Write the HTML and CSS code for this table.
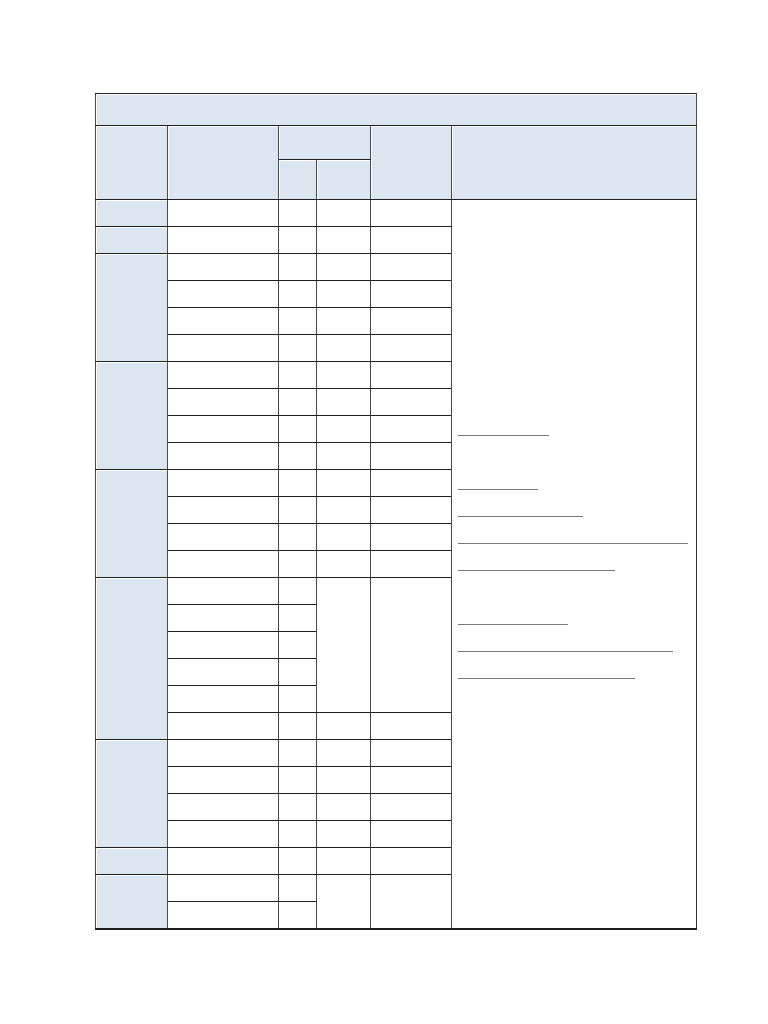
FILE: index.html
```html
<!DOCTYPE html>
<html>
<head>
<meta charset="utf-8">
<link rel="stylesheet" href="styles.css">
</head>
<body>
<table class="grid">
  <colgroup>
    <col class="c1"><col class="c2"><col class="c3"><col class="c4"><col class="c5"><col class="c6">
  </colgroup>
  <thead>
    <tr class="h1"><td class="hd" colspan="6"></td></tr>
    <tr class="h2">
      <td class="hd" rowspan="2"></td>
      <td class="hd" rowspan="2"></td>
      <td class="hd" colspan="2"></td>
      <td class="hd" rowspan="2"></td>
      <td class="hd" rowspan="2"></td>
    </tr>
    <tr class="h3"><td class="hd"></td><td class="hd"></td></tr>
  </thead>
  <tbody>
    <tr><td class="grp"></td><td></td><td></td><td></td><td></td>
      <td class="notes" rowspan="27">
        <div class="slot"><span class="ln w1"></span></div>
        <div class="slot"></div>
        <div class="slot"><span class="ln w2"></span></div>
        <div class="slot"><span class="ln w3"></span></div>
        <div class="slot"><span class="ln w4"></span></div>
        <div class="slot"><span class="ln w5"></span></div>
        <div class="slot"></div>
        <div class="slot"><span class="ln w6"></span></div>
        <div class="slot"><span class="ln w7"></span></div>
        <div class="slot"><span class="ln w8"></span></div>
      </td>
    </tr>
    <tr><td class="grp"></td><td></td><td></td><td></td><td></td></tr>

    <tr><td class="grp" rowspan="4"></td><td></td><td></td><td></td><td></td></tr>
    <tr><td></td><td></td><td></td><td></td></tr>
    <tr><td></td><td></td><td></td><td></td></tr>
    <tr><td></td><td></td><td></td><td></td></tr>

    <tr><td class="grp" rowspan="4"></td><td></td><td></td><td></td><td></td></tr>
    <tr><td></td><td></td><td></td><td></td></tr>
    <tr><td></td><td></td><td></td><td></td></tr>
    <tr><td></td><td></td><td></td><td></td></tr>

    <tr><td class="grp" rowspan="4"></td><td></td><td></td><td></td><td></td></tr>
    <tr><td></td><td></td><td></td><td></td></tr>
    <tr><td></td><td></td><td></td><td></td></tr>
    <tr><td></td><td></td><td></td><td></td></tr>

    <tr><td class="grp" rowspan="6"></td><td></td><td></td><td rowspan="5"></td><td rowspan="5"></td></tr>
    <tr><td></td><td></td></tr>
    <tr><td></td><td></td></tr>
    <tr><td></td><td></td></tr>
    <tr><td></td><td></td></tr>
    <tr><td></td><td></td><td></td><td></td></tr>

    <tr><td class="grp" rowspan="4"></td><td></td><td></td><td></td><td></td></tr>
    <tr><td></td><td></td><td></td><td></td></tr>
    <tr><td></td><td></td><td></td><td></td></tr>
    <tr><td></td><td></td><td></td><td></td></tr>

    <tr><td class="grp"></td><td></td><td></td><td></td><td></td></tr>

    <tr><td class="grp" rowspan="2"></td><td></td><td></td><td rowspan="2"></td><td rowspan="2"></td></tr>
    <tr><td></td><td></td></tr>
  </tbody>
</table>
</body>
</html>
```

FILE: styles.css
```css
html, body {
  margin: 0;
  padding: 0;
  background: #ffffff;
  font-family: "Liberation Sans", Arial, sans-serif;
}

.grid {
  margin: 93px 0 0 95px;
  border-collapse: collapse;
  table-layout: fixed;
  width: 601px;
  border-bottom: 2px solid #1f1f1f;
}

.c1 { width: 72px; }
.c2 { width: 111px; }
.c3 { width: 38px; }
.c4 { width: 54px; }
.c5 { width: 81px; }
.c6 { width: 245px; }

.grid td {
  padding: 0;
  border-top: 1px solid #1f1f1f;
  border-bottom: 1px solid #1f1f1f;
  border-left: 1px solid #4a4a4a;
  border-right: 1px solid #4a4a4a;
  height: 26px;
}

.grid tbody tr { height: 27px; }
.h1 { height: 32px; }
.h1 td { height: 31px; }
.h2 { height: 34px; }
.h2 td { height: 33px; }
.h3 { height: 40px; }
.h3 td { height: 39px; }

.hd,
.grp {
  background: #dce6f1;
  box-shadow: inset 1px 1px 0 #ffffff;
}

.grid td.notes {
  vertical-align: top;
  padding: 209px 0 0 6px;
  border-right: 1px solid #333333;
}

.slot {
  height: 27px;
  display: flex;
  align-items: flex-end;
}

.ln {
  display: block;
  height: 0;
  border-bottom: 1px solid #7a7a7a;
}

.w1 { width: 91px; }
.w2 { width: 80px; }
.w3 { width: 125px; }
.w4 { width: 230px; }
.w5 { width: 157px; }
.w6 { width: 110px; }
.w7 { width: 215px; }
.w8 { width: 177px; }
```
